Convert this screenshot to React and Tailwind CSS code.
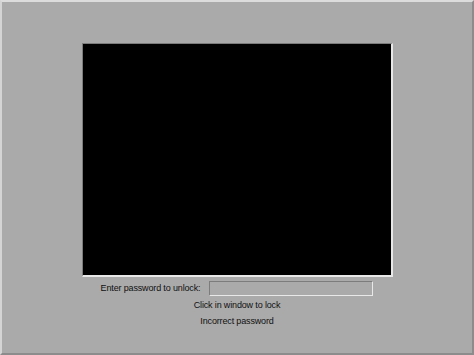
export default function App() {
  return (
    <div className="w-[474px] h-[355px] bg-[#aaaaaa] border-2 border-t-[#dcdcdc] border-l-[#d4d4d4] border-r-[#8c8c8c] border-b-[#8c8c8c] flex flex-col items-center text-[9px] tracking-[-0.15px] text-[#111] font-['Liberation_Sans',Arial,sans-serif]">
      <div className="mt-[41px] w-[311px] h-[234px] bg-black border-t border-l border-t-[#7c7c7c] border-l-[#7c7c7c] border-r-2 border-b-2 border-r-[#e8e8e8] border-b-[#e8e8e8]" />
      <div className="mt-[4px] flex items-center gap-[9px] h-[15px]">
        <span className="leading-none">Enter password to unlock:</span>
        <div className="w-[164px] h-[15px] bg-[#aaaaaa] border border-t-[#7c7c7c] border-l-[#7c7c7c] border-r-[#e8e8e8] border-b-[#e8e8e8]" />
      </div>
      <p className="mt-[1px] leading-[16px]">Click in window to lock</p>
      <p className="leading-[16px]">Incorrect password</p>
    </div>
  );
}
